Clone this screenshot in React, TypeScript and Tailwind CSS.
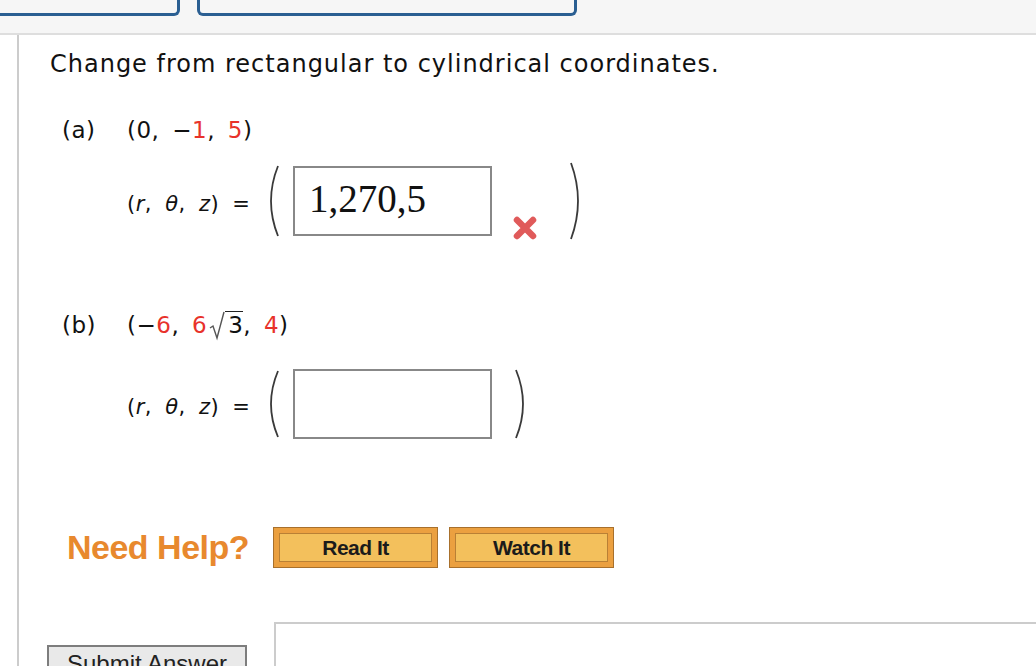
import React from 'react'

const sans = { fontFamily: '"DejaVu Sans", Verdana, sans-serif' }
const arial = { fontFamily: '"Liberation Sans", Arial, sans-serif' }

function BigParen({ side, h }: { side: 'l' | 'r'; h: number }) {
  const d = side === 'l' ? `M15 2 Q1 ${h / 2} 15 ${h - 2}` : `M3 2 Q17 ${h / 2} 3 ${h - 2}`
  return (
    <svg width="18" height={h} viewBox={`0 0 18 ${h}`} className="shrink-0">
      <path d={d} fill="none" stroke="#3a3a3a" strokeWidth="1.8" />
    </svg>
  )
}

function OrangeButton({ label }: { label: string }) {
  return (
    <div className="h-[41px] w-[165px] border border-[#a8702c] bg-[#eba040] p-[5px]">
      <div
        className="flex h-full items-center justify-center border border-[#b98035] bg-[#f3c05c] text-[21px] font-bold tracking-[-0.5px] text-[#1b1b1b]"
        style={arial}
      >
        {label}
      </div>
    </div>
  )
}

function CoordRow({ value, wrong }: { value: string; wrong?: boolean }) {
  return (
    <div className="flex h-[82px] items-center pl-[77px]">
      <span className="mt-[8px] w-[136px] text-[21px] tracking-[0.5px] text-[#111] [word-spacing:6px]" style={sans}>
        (<i>r</i>, <i>θ</i>, <i>z</i>) =
      </span>
      <BigParen side="l" h={wrong ? 74 : 70} />
      <div
        className="ml-[12px] flex h-[70px] w-[199px] items-center border-2 border-[#888] bg-white px-[14px] pb-[4px] text-[39px] text-[#111]"
        style={{ fontFamily: '"Liberation Serif", "Times New Roman", serif' }}
      >
        {value}
      </div>
      {wrong ? (
        <div className="flex w-[76px] items-end self-stretch pb-[2px] pl-[20px]">
          <svg width="26" height="24" viewBox="0 0 26 24">
            <path d="M5 4 L21 20 M21 4 L5 20" stroke="#e05a5a" strokeWidth="6.5" strokeLinecap="round" />
          </svg>
        </div>
      ) : (
        <div className="w-[21px]" />
      )}
      <BigParen side="r" h={wrong ? 80 : 72} />
    </div>
  )
}

export default function App() {
  return (
    <div className="h-[666px] w-[1036px] overflow-hidden bg-white">
      <div className="flex h-[35px] items-start border-b-2 border-[#dedede] bg-[#f6f6f6]">
        <div className="ml-[-12px] h-[16px] w-[192px] rounded-b-[6px] border-[3px] border-t-0 border-[#2b5f92]" />
        <div className="ml-[17px] h-[16px] w-[380px] rounded-b-[6px] border-[3px] border-t-0 border-[#2b5f92]" />
      </div>

      <div className="ml-[17px] h-[631px] border-l-2 border-[#cccccc] pl-[31px]" style={sans}>
        <h1 className="pt-[14px] text-[24px] leading-[30px] tracking-[1px] text-[#111]">
          Change from rectangular to cylindrical coordinates.
        </h1>

        <div className="mt-[36px] flex h-[30px] items-center pl-[12px] text-[23px] tracking-[0.5px] text-[#111] [word-spacing:5px]">
          <span className="w-[65px]">(a)</span>
          <span>
            (0, −<span className="text-[#e8322a]">1</span>, <span className="text-[#e8322a]">5</span>)
          </span>
        </div>

        <div className="mt-[15px]">
          <CoordRow value="1,270,5" wrong />
        </div>

        <div className="mt-[68px] flex h-[30px] items-center pl-[12px] text-[23px] tracking-[0.5px] text-[#111] [word-spacing:5px]">
          <span className="w-[65px]">(b)</span>
          <span>
            (−<span className="text-[#e8322a]">6</span>, <span className="text-[#e8322a]">6</span>
            <svg width="16" height="30" viewBox="0 0 16 30" className="ml-[2px] inline-block align-[-8px]">
              <path d="M1 17 L4 15 L8 27 L15 1" fill="none" stroke="#555" strokeWidth="1.4" />
            </svg>
            <span className="inline-block border-t-[1.5px] border-[#222] pl-[3px] leading-[26px]">3</span>
            , <span className="text-[#e8322a]">4</span>)
          </span>
        </div>

        <div className="mt-[23px]">
          <CoordRow value="" />
        </div>

        <div className="mt-[82px] flex h-[41px] items-center pl-[17px]">
          <span className="w-[206px] text-[34px] leading-[41px] font-bold tracking-[-0.5px] text-[#e8892e]" style={arial}>
            Need Help?
          </span>
          <div className="flex gap-[11px]">
            <OrangeButton label="Read It" />
            <OrangeButton label="Watch It" />
          </div>
        </div>

        <div className="mt-[54px] ml-[-3px] flex items-start">
          <div
            className="mt-[23px] h-[34px] w-[200px] border-2 border-[#7d7d7d] bg-[#e9e9e9] pt-[3px] text-center text-[24px] leading-[28px] text-[#222]"
            style={arial}
          >
            Submit Answer
          </div>
          <div className="ml-[27px] h-[60px] flex-1 border-l-2 border-t-2 border-[#cccccc]" />
        </div>
      </div>
    </div>
  )
}
